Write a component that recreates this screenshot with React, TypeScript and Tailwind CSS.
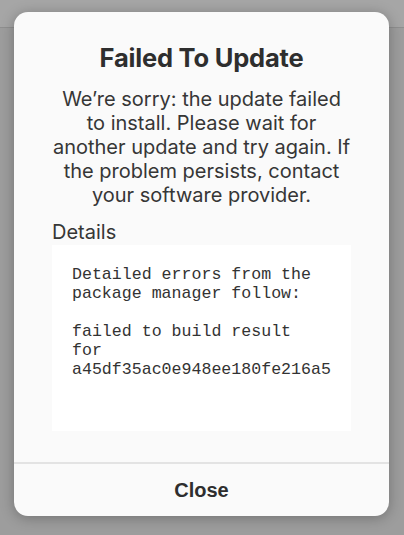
const App = () => {
  const details = [
    "Detailed errors from the",
    "package manager follow:",
    "",
    "failed to build result",
    "for",
    "a45df35ac0e948ee180fe216a5",
  ];

  return (
    <div className="relative h-[535px] w-full overflow-hidden bg-[#9d9d9d]">
      {/* Dimmed window behind */}
      <div className="h-[28px] border-b border-[#8f8f8f] bg-[#a6a6a6]" />

      {/* Dialog */}
      <div
        className="absolute left-[14px] top-[12px] flex w-[375px] flex-col rounded-[14px] bg-[#fafafa] shadow-[0_2px_14px_rgba(0,0,0,0.28)]"
        style={{ fontFamily: "Inter, 'Noto Sans', sans-serif" }}
      >
        <div className="flex flex-col px-[37px] pt-[32px] pb-[31px]">
          <h1 className="text-center text-[25.5px] font-bold leading-[28px] tracking-[-0.2px] text-[#2e2e2e]">
            Failed To Update
          </h1>
          <p className="mt-[15px] text-center text-[20px] leading-[24px] text-[#363636]">
            We’re sorry: the update failed to install. Please wait for another update and try again. If the
            problem persists, contact your software provider.
          </p>
          <div className="mt-[13px] px-px text-[20px] leading-[24px] text-[#363636]">Details</div>
          <div className="mx-px mt-px h-[186px] bg-white px-[20px] pt-[20px]">
            {details.map((line, i) => (
              <div
                key={i}
                className="h-[19px] whitespace-pre text-[16.6px] leading-[19px] text-[#333333]"
                style={{ fontFamily: "'Liberation Mono', monospace" }}
              >
                {line}
              </div>
            ))}
          </div>
        </div>
        <div className="h-[2px] bg-[#e3e3e3]" />
        <button
          className="flex h-[52px] items-center justify-center rounded-b-[14px] text-[20px] font-bold text-[#2e2e2e]"
          style={{ fontFamily: "'Liberation Sans', Arial, sans-serif" }}
        >
          Close
        </button>
      </div>
    </div>
  );
};

export default App;
